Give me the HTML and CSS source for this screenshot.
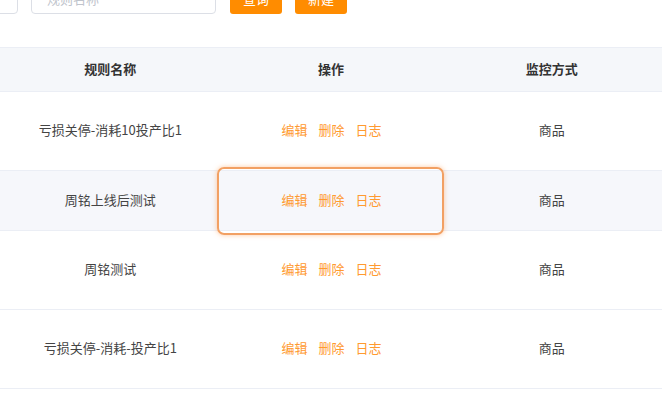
FILE: index.html
```html
<!DOCTYPE html>
<html lang="zh-CN">
<head>
<meta charset="utf-8">
<link rel="stylesheet" href="styles.css">
</head>
<body>
<div class="toolbar">
  <div class="input input-first"></div>
  <div class="input input-name"><span class="placeholder">规则名称</span></div>
  <button class="btn btn-query">查询</button>
  <button class="btn btn-new">新建</button>
</div>
<div class="table">
  <div class="row head">
    <div class="cell">规则名称</div>
    <div class="cell">操作</div>
    <div class="cell">监控方式</div>
  </div>
  <div class="row tall">
    <div class="cell">亏损关停-消耗10投产比1</div>
    <div class="cell actions"><a>编辑</a><a>删除</a><a>日志</a></div>
    <div class="cell">商品</div>
  </div>
  <div class="row short hover">
    <div class="cell">周铭上线后测试</div>
    <div class="cell actions focus"><a>编辑</a><a>删除</a><a>日志</a><span class="focus-ring"></span></div>
    <div class="cell">商品</div>
  </div>
  <div class="row tall">
    <div class="cell">周铭测试</div>
    <div class="cell actions"><a>编辑</a><a>删除</a><a>日志</a></div>
    <div class="cell">商品</div>
  </div>
  <div class="row tall">
    <div class="cell">亏损关停-消耗-投产比1</div>
    <div class="cell actions"><a>编辑</a><a>删除</a><a>日志</a></div>
    <div class="cell">商品</div>
  </div>
</div>
</body>
</html>
```
FILE: styles.css
```css
* { box-sizing: border-box; }
html, body { margin: 0; padding: 0; background: #fff; overflow: hidden; }
body {
  width: 662px;
  height: 402px;
  font-family: "Noto Sans CJK SC", "Noto Sans", sans-serif;
  font-size: 13px;
  color: #333;
}
.toolbar {
  display: flex;
  align-items: center;
  height: 32px;
  margin-top: -18px;
}
.input {
  height: 32px;
  border: 1px solid #dcdfe6;
  border-radius: 4px;
  background: #fff;
}
.input-first { width: 150px; margin-left: -132px; }
.input-name {
  width: 185px;
  margin-left: 13px;
  padding-left: 15px;
  display: flex;
  align-items: center;
}
.placeholder { color: #c0c4cc; font-size: 13px; }
.btn {
  height: 32px;
  border: none;
  border-radius: 3px;
  background: #ff8c00;
  color: #fff;
  font-family: inherit;
  font-size: 13px;
  padding: 0;
  width: 52px;
}
.btn-query { margin-left: 14px; }
.btn-new { margin-left: 13px; }
.table { margin-top: 33px; }
.row {
  display: grid;
  grid-template-columns: 1fr 1fr 1fr;
  border-bottom: 1px solid #ebeef5;
}
.row.head {
  height: 45px;
  border-top: 1px solid #ebeef5;
  background: #f5f7fa;
  font-weight: bold;
  color: #333;
}
.row.tall { height: 79px; }
.row.short { height: 60px; }
.row.hover { background: #f6f7fb; }
.cell {
  display: flex;
  align-items: center;
  justify-content: center;
  position: relative;
  padding-bottom: 3px;
  color: #444;
}
.head .cell { color: #333; }
.actions { gap: 11px; padding-left: 1px; }
.actions a { color: #ff9a30; }
.focus-ring {
  position: absolute;
  left: -4px;
  right: -3px;
  top: -4px;
  bottom: -5px;
  border: 2px solid #f2a063;
  border-radius: 7px;
  box-shadow: 0 0 5px rgba(255, 150, 70, 0.5);
  pointer-events: none;
}
```
